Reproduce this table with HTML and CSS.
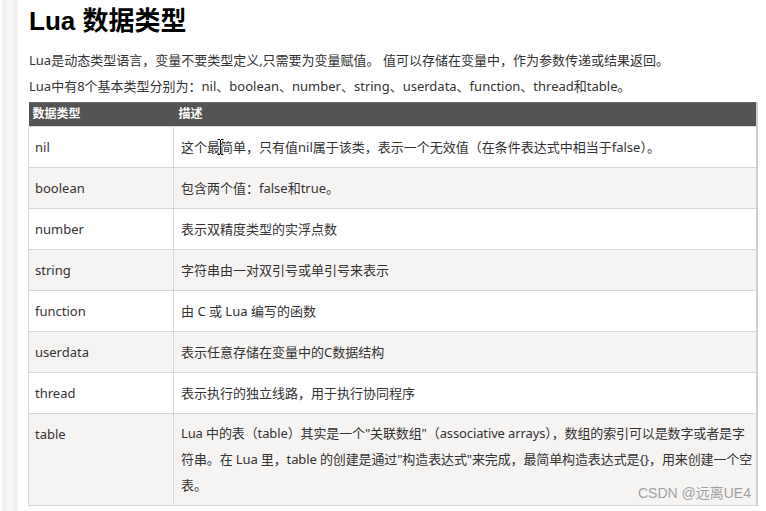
FILE: index.html
```html
<!DOCTYPE html>
<html lang="zh">
<head>
<meta charset="utf-8">
<link rel="stylesheet" href="styles.css">
</head>
<body>
<div class="page">
  <div class="side"></div>
  <main class="main">
    <h1 class="title">Lua 数据类型</h1>
    <p class="para">Lua是动态类型语言，变量不要类型定义,只需要为变量赋值。 值可以存储在变量中，作为参数传递或结果返回。</p>
    <p class="para">Lua中有8个基本类型分别为：nil、boolean、number、string、userdata、function、thread和table。</p>
    <div class="table-wrap">
      <table class="types">
        <colgroup><col class="c1"><col class="c2"></colgroup>
        <thead>
          <tr><th>数据类型</th><th class="th2">描述</th></tr>
        </thead>
        <tbody>
          <tr><td>nil</td><td class="desc">这个最简单，只有值nil属于该类，表示一个无效值（在条件表达式中相当于false）。</td></tr>
          <tr class="alt"><td>boolean</td><td class="desc">包含两个值：false和true。</td></tr>
          <tr><td>number</td><td class="desc">表示双精度类型的实浮点数</td></tr>
          <tr class="alt"><td>string</td><td class="desc">字符串由一对双引号或单引号来表示</td></tr>
          <tr><td>function</td><td class="desc">由 C 或 Lua 编写的函数</td></tr>
          <tr class="alt"><td>userdata</td><td class="desc">表示任意存储在变量中的C数据结构</td></tr>
          <tr><td>thread</td><td class="desc">表示执行的独立线路，用于执行协同程序</td></tr>
          <tr class="alt"><td class="top">table</td><td class="desc tight">Lua 中的表（table）其实是一个"关联数组"（associative arrays），数组的索引可以是数字或者是字符串。在 Lua 里，table 的创建是通过"构造表达式"来完成，最简单构造表达式是{}，用来创建一个空表。</td></tr>
        </tbody>
      </table>
      <svg class="cursor" width="7" height="16" viewBox="0 0 7 16"><path d="M0.5 0.5h2.5M4 0.5h2.5M3.5 1v14M0.5 15.5h2.5M4 15.5h2.5" stroke="#111" stroke-width="1" fill="none"/></svg>
      <span class="watermark">CSDN @远离UE4</span>
    </div>
  </main>
</div>
</body>
</html>
```

FILE: styles.css
```css
html, body {
  margin: 0;
  padding: 0;
  background: #fff;
}
body {
  font-family: "Noto Sans", "Noto Sans CJK SC", sans-serif;
  color: #333;
  font-size: 13px;
}
.page {
  display: flex;
  min-height: 511px;
}
.side {
  width: 18px;
  flex: none;
  background: linear-gradient(to right, #fbfbfb 0, #fbfbfb 2px, #f1efef 3px, #f1efef 6px, #f8f7f7 7px, #f8f7f7 13px, #efeded 14px, #f3f1f1 18px);
}
.main {
  flex: 1;
  padding: 5px 0 0 10px;
}
.title {
  margin: 0;
  font-family: "Liberation Sans", "Noto Sans CJK SC", sans-serif;
  font-weight: bold;
  font-size: 26px;
  line-height: 32px;
  color: #000;
  padding-left: 1px;
}
.para {
  margin: 0;
  line-height: 26px;
  font-size: 13px;
  padding-left: 1px;
}
.para:first-of-type {
  margin-top: 10px;
}
.table-wrap {
  position: relative;
  margin-top: 3px;
  width: 730px;
}
.types {
  width: 730px;
  border-collapse: collapse;
  table-layout: fixed;
  border-right: 2px solid #cfcfcf;
}
.c1 { width: 145px; }
.types th {
  background: #555454;
  color: #fff;
  font-weight: bold;
  font-size: 12px;
  text-align: left;
  line-height: 24px;
  padding: 0 4px;
  height: 24px;
  box-shadow: inset 0 1px 0 #6a6a6a;
}
.types th.th2 {
  padding-left: 5px;
}
.types td {
  border: 1px solid #d8d8d8;
  padding: 7px 6px;
  line-height: 26px;
  vertical-align: middle;
  font-size: 13px;
  color: #333;
}
.types td.top {
  vertical-align: top;
}
.types td.desc {
  padding-left: 7px;
  padding-right: 1px;
}
.types td.tight {
  letter-spacing: -0.12px;
  padding-top: 6px;
}
.types tr.alt td {
  background: #f6f4f2;
}
.cursor {
  position: absolute;
  left: 189px;
  top: 37px;
}
.watermark {
  position: absolute;
  right: 7px;
  bottom: 4px;
  font-family: "Liberation Sans", "Noto Sans CJK SC", sans-serif;
  font-size: 14px;
  color: #a2a2a2;
}
```
